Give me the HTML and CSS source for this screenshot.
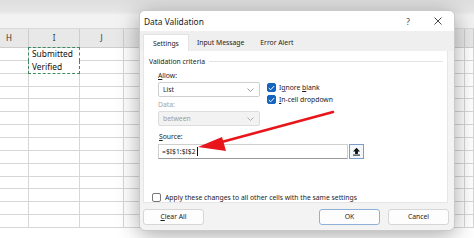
FILE: index.html
```html
<!doctype html>
<html lang="en">
<head>
  <meta charset="utf-8">
  <title>Data Validation</title>
  <link rel="stylesheet" href="styles.css">
</head>
<body>
  <div class="sheet">
    <div class="ribbon"></div>
    <div class="row head">
      <div class="c">H</div><div class="c">I</div><div class="c">J</div><div class="c"></div><div class="c"></div>
    </div>
    <div class="row"><div class="c"></div><div class="c sel top">Submitted</div><div class="c"></div><div class="c"></div><div class="c"></div></div>
    <div class="row"><div class="c"></div><div class="c sel bot">Verified</div><div class="c"></div><div class="c"></div><div class="c"></div></div>
    <div class="row"><div class="c"></div><div class="c"></div><div class="c"></div><div class="c"></div><div class="c"></div></div>
    <div class="row"><div class="c"></div><div class="c"></div><div class="c"></div><div class="c"></div><div class="c"></div></div>
    <div class="row"><div class="c"></div><div class="c"></div><div class="c"></div><div class="c"></div><div class="c"></div></div>
    <div class="row"><div class="c"></div><div class="c"></div><div class="c"></div><div class="c"></div><div class="c"></div></div>
    <div class="row"><div class="c"></div><div class="c"></div><div class="c"></div><div class="c"></div><div class="c"></div></div>
    <div class="row"><div class="c"></div><div class="c"></div><div class="c"></div><div class="c"></div><div class="c"></div></div>
    <div class="row"><div class="c"></div><div class="c"></div><div class="c"></div><div class="c"></div><div class="c"></div></div>
    <div class="row"><div class="c"></div><div class="c"></div><div class="c"></div><div class="c"></div><div class="c"></div></div>
    <div class="row"><div class="c"></div><div class="c"></div><div class="c"></div><div class="c"></div><div class="c"></div></div>
    <div class="row"><div class="c"></div><div class="c"></div><div class="c"></div><div class="c"></div><div class="c"></div></div>
    <div class="row"><div class="c"></div><div class="c"></div><div class="c"></div><div class="c"></div><div class="c"></div></div>
    <div class="row"><div class="c"></div><div class="c"></div><div class="c"></div><div class="c"></div><div class="c"></div></div>
  </div>

  <div class="dialog">
    <div class="titlebar">
      <span class="title">Data Validation</span>
      <span class="help">?</span>
      <span class="close">
        <svg width="8" height="8" viewBox="0 0 8 8"><path d="M0.5 0.5L7.5 7.5M7.5 0.5L0.5 7.5" stroke="#333" stroke-width="0.9"/></svg>
      </span>
    </div>
    <div class="tabs">
      <div class="tab active">Settings</div>
      <div class="tab">Input Message</div>
      <div class="tab">Error Alert</div>
    </div>
    <div class="panel">
      <div class="legend"><span>Validation criteria</span></div>
      <div class="criteria">
        <div class="col">
          <div class="lbl"><u>A</u>llow:</div>
          <div class="combo"><span>List</span><svg width="7" height="4" viewBox="0 0 7 4"><path d="M0.5 0.5L3.5 3.5L6.5 0.5" fill="none" stroke="#888" stroke-width="0.8"/></svg></div>
          <div class="lbl dim">Data:</div>
          <div class="combo off"><span>between</span><svg width="7" height="4" viewBox="0 0 7 4"><path d="M0.5 0.5L3.5 3.5L6.5 0.5" fill="none" stroke="#999" stroke-width="0.8"/></svg></div>
        </div>
        <div class="checks">
          <label class="chk"><span class="box on"><svg width="7" height="6" viewBox="0 0 7 6"><path d="M0.8 3L2.7 4.8L6.2 1" fill="none" stroke="#fff" stroke-width="1"/></svg></span><span>I<u>g</u>nore <u>b</u>lank</span></label>
          <label class="chk"><span class="box on"><svg width="7" height="6" viewBox="0 0 7 6"><path d="M0.8 3L2.7 4.8L6.2 1" fill="none" stroke="#fff" stroke-width="1"/></svg></span><span><u>I</u>n-cell dropdown</span></label>
        </div>
      </div>
      <div class="lbl src"><u>S</u>ource:</div>
      <div class="source">
        <div class="input">=$I$1:$I$2<span class="caret"></span></div>
        <div class="pick">
          <svg width="9" height="9" viewBox="0 0 9 9"><path d="M4.5 0.8L8 4.6H5.9V7H3.1V4.6H1Z" fill="#111"/><rect x="1" y="7.6" width="7" height="1" fill="#111"/></svg>
        </div>
      </div>
      <label class="chk apply"><span class="box"></span><span>Apply these changes to all other cells with the same settings</span></label>
    </div>
    <div class="footer">
      <div class="btn"><u>C</u>lear All</div>
      <div class="spacer"></div>
      <div class="btn ok">OK</div>
      <div class="btn">Cancel</div>
    </div>
  </div>

  <svg class="arrow" width="474" height="238" viewBox="0 0 474 238">
    <path d="M333 112L218 143" stroke="#e8161b" stroke-width="2.6" stroke-linecap="round"/>
    <path d="M198 147L222 137L226 151Z" fill="#e8161b"/>
  </svg>
</body>
</html>
```

FILE: styles.css
```css
*{box-sizing:border-box}
html,body{margin:0;height:100%}
body{width:474px;height:238px;overflow:hidden;position:relative;background:#fff;font-family:"Noto Sans","Open Sans",Arial,sans-serif;color:#1b1b1b}

/* spreadsheet behind the dialog */
.sheet{width:474px}
.ribbon{height:29px;background:linear-gradient(180deg,#dedede 0,#e6e6e6 12px,#f2f2f2 15px,#f2f2f2 100%);border-bottom:1px solid #dadada}
.row{display:grid;grid-template-columns:29px 51px 44px 341px 1fr;height:12.86px}
.row .c{border-right:1px solid #d6d6d6;border-bottom:1px solid #d6d6d6;font-size:8.4px;line-height:11.5px;padding-left:3px;white-space:nowrap;color:#111}
.row.head{height:19px;background:#e8e8e8}
.row.head .c{border-color:#cdcdcd;text-align:center;padding:0;font-size:8px;line-height:18px;color:#333}
.row.head .c:first-child{text-align:left;padding-left:6px}
.sel{border:1px dashed #3f8a60 !important;margin:-1px 0 0 -1px}
.sel.top{border-bottom:none !important}
.sel.bot{border-top:none !important;margin-top:0}

/* dialog */
.dialog{position:absolute;left:139px;top:10px;width:316px;height:221px;background:#f3f3f3;border:1px solid #c9c9c9;border-radius:6px;box-shadow:0 4px 22px rgba(0,0,0,0.35);display:flex;flex-direction:column;overflow:hidden;font-size:6.8px}
.titlebar{height:20px;background:#fff;display:flex;align-items:center;padding:0 0 0 4px;flex-shrink:0}
.title{font-size:8.4px;flex:1;color:#222}
.help{width:28px;text-align:center;font-size:8.4px;color:#444}
.close{width:32px;display:flex;justify-content:center}
.tabs{height:20px;display:flex;align-items:flex-end;padding-left:3px;background:#efefef;flex-shrink:0}
.tab{height:17px;padding:0 8px;line-height:17px;color:#222}
.tab.active{background:#fff;border:1px solid #e3e3e3;border-bottom:none;padding:0 9px}
.panel{background:#fff;margin:0 6px 0 3px;height:152px;border:1px solid #e6e6e6;border-top:none;padding:6px 4px 0 5px;display:flex;flex-direction:column;flex-shrink:0}
.legend{display:flex;align-items:center;gap:4px;height:11px}
.legend::after{content:"";flex:1;height:1px;background:#e4e4e4}
.criteria{display:flex;padding-left:9px;margin-top:3px}
.col{width:102px}
.lbl{height:11px;line-height:11px;margin-top:1px}
.lbl.dim{color:#a3a3a3;margin-top:2px}
.combo{height:15px;border:1px solid #cfcfcf;border-radius:2px;display:flex;align-items:center;justify-content:space-between;padding:0 5px 0 4px;background:#fff;margin-top:1px}
.combo.off{background:#f2f2f2;color:#9c9c9c;border-color:#dcdcdc}
.checks{display:flex;flex-direction:column;gap:3px;padding:14px 0 0 7px}
.chk{display:flex;align-items:center;gap:3px;height:9px}
.box{width:9px;height:9px;border:1px solid #777;border-radius:2px;display:flex;align-items:center;justify-content:center;background:#fff;flex-shrink:0}
.box.on{background:#1565c0;border-color:#1565c0}
.src{padding-left:10px;margin-top:5px}
.source{display:flex;gap:1px;padding-left:9px;margin-top:2px}
.input{width:190px;height:15px;border:1px solid #cfcfcf;border-bottom-color:#9a9a9a;line-height:13px;padding-left:3px;display:flex;align-items:center}
.caret{width:1px;height:9px;background:#111;margin-left:1px}
.pick{width:15px;height:15px;border:1px solid #7a9cc6;background:#f3f7fb;display:flex;align-items:center;justify-content:center}
.apply{margin:34px 0 0 3px;gap:4px}
.footer{display:flex;gap:8px;padding:6px 5px 0 3px}
.spacer{flex:1}
.btn{width:61px;height:16px;background:#fdfdfd;border:1px solid #d6d6d6;border-radius:3px;text-align:center;line-height:14px}
.btn.ok{border-color:#8fb1d8}
u{text-decoration-thickness:0.5px;text-underline-offset:1px}

.arrow{position:absolute;left:0;top:0;pointer-events:none}
```
